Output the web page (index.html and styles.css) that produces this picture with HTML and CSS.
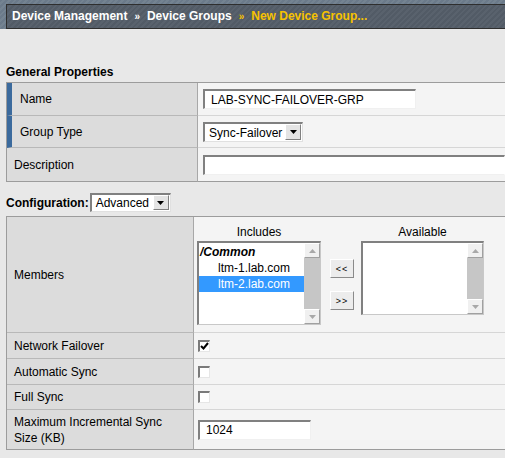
FILE: index.html
```html
<!DOCTYPE html>
<html lang="en">
<head>
    <meta charset="UTF-8">
    <title>New Device Group</title>
    <link rel="stylesheet" href="styles.css">
</head>
<body>
    <div class="topbar">
        <div class="crumbs">
            <span>Device Management</span><span class="sep">&raquo;</span><span>Device Groups</span><span class="sep cur">&raquo;</span><span class="cur">New Device Group...</span>
        </div>
    </div>

    <div class="content">
        <div class="section-title">General Properties</div>

        <div class="props general">
            <div class="label req">Name</div>
            <div class="value"><input type="text" class="text name" value="LAB-SYNC-FAILOVER-GRP"></div>

            <div class="label req">Group Type</div>
            <div class="value">
                <div class="dropdown type">Sync-Failover
                    <span class="arrow"><svg width="7" height="4" viewBox="0 0 7 4"><path d="M0 0h7L3.5 4z" fill="#000"/></svg></span>
                </div>
            </div>

            <div class="label last">Description</div>
            <div class="value last"><input type="text" class="text desc" value=""></div>
        </div>

        <div class="config-line">
            <span class="section-title">Configuration:</span>
            <div class="dropdown adv">Advanced
                <span class="arrow"><svg width="7" height="4" viewBox="0 0 7 4"><path d="M0 0h7L3.5 4z" fill="#000"/></svg></span>
            </div>
        </div>

        <div class="props members">
            <div class="label">Members</div>
            <div class="value top">
                <div class="picker">
                    <div class="col">
                        <div class="col-title">Includes</div>
                        <div class="listbox incl">
                            <div class="items">
                                <div class="item part">/Common</div>
                                <div class="item sub">ltm-1.lab.com</div>
                                <div class="item sub sel">ltm-2.lab.com</div>
                            </div>
                            <div class="vscroll">
                                <span class="sbtn"><svg width="7" height="4" viewBox="0 0 7 4"><path d="M0 4h7L3.5 0z" fill="#a8a8a8"/></svg></span>
                                <span class="track"></span>
                                <span class="sbtn"><svg width="7" height="4" viewBox="0 0 7 4"><path d="M0 0h7L3.5 4z" fill="#a8a8a8"/></svg></span>
                            </div>
                        </div>
                    </div>
                    <div class="movers">
                        <button class="mv">&lt;&lt;</button>
                        <button class="mv">&gt;&gt;</button>
                    </div>
                    <div class="col">
                        <div class="col-title">Available</div>
                        <div class="listbox avail">
                            <div class="items"></div>
                            <div class="vscroll">
                                <span class="sbtn"><svg width="7" height="4" viewBox="0 0 7 4"><path d="M0 4h7L3.5 0z" fill="#a8a8a8"/></svg></span>
                                <span class="track"></span>
                                <span class="sbtn"><svg width="7" height="4" viewBox="0 0 7 4"><path d="M0 0h7L3.5 4z" fill="#a8a8a8"/></svg></span>
                            </div>
                        </div>
                    </div>
                </div>
            </div>

            <div class="label">Network Failover</div>
            <div class="value"><span class="check"><svg width="9" height="8" viewBox="0 0 9 8"><path d="M1 4l2.5 2.5L8 1" stroke="#000" stroke-width="2" fill="none"/></svg></span></div>

            <div class="label">Automatic Sync</div>
            <div class="value"><span class="check"></span></div>

            <div class="label">Full Sync</div>
            <div class="value"><span class="check"></span></div>

            <div class="label last">Maximum Incremental Sync<br>Size (KB)</div>
            <div class="value last"><input type="text" class="text size" value="1024"></div>
        </div>
    </div>
</body>
</html>
```

FILE: styles.css
```css
html, body{
    margin: 0;
    overflow: hidden;
}

body{
    background: #e8e8e8;
    font-family: "Liberation Sans", Arial, sans-serif;
    font-size: 12px;
    color: #000;
}

/* breadcrumb bar */
.topbar{
    height: 29px;
    box-sizing: border-box;
    padding: 4px 0 0 6px;
    background: repeating-linear-gradient(135deg, #6b7a8a 0 2px, #748391 2px 4px);
}

.crumbs{
    height: 25px;
    box-sizing: border-box;
    border: 1px solid #2e2e2e;
    border-right: none;
    padding-left: 5px;
    line-height: 23px;
    background: repeating-linear-gradient(135deg, #525b66 0 2px, #59626d 2px 4px);
    color: #fff;
    font-weight: bold;
    white-space: nowrap;
}

.crumbs .sep{
    font-size: 10px;
    margin: 0 7px 0 7px;
}

.crumbs .cur{
    color: #f7c200;
}

.content{
    padding-left: 6px;
}

.section-title{
    font-weight: bold;
    line-height: 14px;
}

.content > .section-title{
    margin-top: 36px;
}

/* property tables */
.props{
    display: grid;
    border-top: 1px solid #9c9c9c;
    border-left: 1px solid #9c9c9c;
}

.general{
    margin-top: 3px;
    grid-template-columns: 191px 1fr;
    grid-template-rows: 33px 32px 34px;
}

.members{
    margin-top: 3px;
    grid-template-columns: 187px 1fr;
    grid-template-rows: 116px 26px 26px 25px 40px;
}

.label, .value{
    box-sizing: border-box;
    display: flex;
    align-items: center;
    line-height: 16px;
    min-width: 0;
}

.label{
    background: #dcdcdc;
    border-right: 1px solid #a8a8a8;
    border-bottom: 1px solid #b8b8b8;
    padding-left: 7px;
}

.label.req{
    border-left: 5px solid #3b6a9d;
    padding-left: 8px;
}

.value{
    background: #f4f4f4;
    border-bottom: 1px solid #d6d6d6;
    padding-left: 5px;
}

.label.last, .value.last{
    border-bottom-color: #9c9c9c;
}

.members .value{
    padding-left: 4px;
}

.value.top{
    align-items: flex-start;
    padding-left: 3px;
    padding-top: 7px;
}

/* inputs */
.text{
    box-sizing: border-box;
    height: 20px;
    margin: 0;
    padding: 0 0 0 6px;
    border-top: 2px solid #808080;
    border-left: 2px solid #808080;
    border-right: 1px solid #f0f0f0;
    border-bottom: 1px solid #f0f0f0;
    background: #fff;
    font-family: "Liberation Sans", Arial, sans-serif;
    font-size: 12px;
    color: #000;
    outline: none;
}

.name{ width: 213px; }
.desc{ width: 100%; border-right-color: #fff; }
.size{ width: 113px; }

.dropdown{
    box-sizing: border-box;
    position: relative;
    height: 20px;
    padding-left: 4px;
    line-height: 18px;
    background: #fff;
    border-top: 2px solid #808080;
    border-left: 2px solid #808080;
    border-right: 1px solid #e0e0e0;
    border-bottom: 1px solid #e0e0e0;
}

.dropdown.type{ width: 100px; }

.dropdown.adv{
    width: 81px;
    height: 19px;
    line-height: 17px;
}

.dropdown .arrow{
    position: absolute;
    right: 1px;
    top: 0;
    width: 16px;
    height: 16px;
    box-sizing: border-box;
    display: flex;
    align-items: center;
    justify-content: center;
    background: #e4e4e4;
    border-top: 1px solid #fff;
    border-left: 1px solid #fff;
    border-right: 1px solid #808080;
    border-bottom: 1px solid #808080;
}

.dropdown.adv .arrow{
    height: 15px;
}

.config-line{
    display: flex;
    align-items: center;
    gap: 1px;
    height: 21px;
    margin-top: 10px;
}

/* member picker */
.picker{
    display: flex;
    align-items: flex-start;
}

.col-title{
    text-align: center;
    line-height: 16px;
    height: 17px;
}

.listbox{
    box-sizing: border-box;
    display: flex;
    background: #fff;
    border-top: 2px solid #808080;
    border-left: 2px solid #808080;
    border-right: 1px solid #c8c8c8;
    border-bottom: 1px solid #c8c8c8;
}

.listbox.incl{ width: 124px; height: 84px; }
.listbox.avail{ width: 123px; height: 74px; }

.items{
    flex: 1;
    padding-top: 1px;
}

.item{
    line-height: 16px;
    white-space: nowrap;
    padding-left: 19px;
}

.item.part{
    padding-left: 1px;
    font-weight: bold;
    font-style: italic;
}

.item.sel{
    background: #3399ff;
    color: #fff;
}

.vscroll{
    width: 16px;
    display: flex;
    flex-direction: column;
}

.sbtn{
    box-sizing: border-box;
    height: 15px;
    display: flex;
    align-items: center;
    justify-content: center;
    background: #f0f0f0;
    border-top: 1px solid #fff;
    border-left: 1px solid #fff;
    border-right: 1px solid #a0a0a0;
    border-bottom: 1px solid #a0a0a0;
}

.track{
    flex: 1;
    background: #c6c6c6;
}

.movers{
    display: flex;
    flex-direction: column;
    gap: 13px;
    margin: 0 7px 0 9px;
    padding-top: 35px;
}

.mv{
    box-sizing: border-box;
    width: 24px;
    height: 19px;
    padding: 0;
    background: #ececec;
    border-top: 1px solid #fff;
    border-left: 1px solid #fff;
    border-right: 1px solid #8a8a8a;
    border-bottom: 1px solid #8a8a8a;
    font-family: "Liberation Sans", Arial, sans-serif;
    font-size: 9px;
    letter-spacing: 1px;
    color: #000;
}

/* checkbox */
.check{
    box-sizing: border-box;
    width: 12px;
    height: 12px;
    display: flex;
    align-items: center;
    justify-content: center;
    background: #fff;
    border-top: 2px solid #7a7a7a;
    border-left: 2px solid #7a7a7a;
    border-right: 1px solid #e6e6e6;
    border-bottom: 1px solid #e6e6e6;
}
```
